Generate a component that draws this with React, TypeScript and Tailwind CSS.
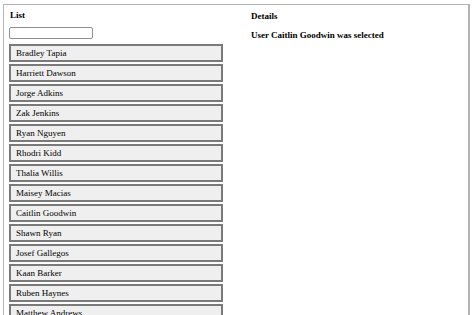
const users = [
  'Bradley Tapia',
  'Harriett Dawson',
  'Jorge Adkins',
  'Zak Jenkins',
  'Ryan Nguyen',
  'Rhodri Kidd',
  'Thalia Willis',
  'Maisey Macias',
  'Caitlin Goodwin',
  'Shawn Ryan',
  'Josef Gallegos',
  'Kaan Barker',
  'Ruben Haynes',
  'Matthew Andrews',
  'Kian Burgess',
];

export default function App() {
  const selected = 'Caitlin Goodwin';

  return (
    <div className="h-[315px] overflow-hidden bg-white font-['Liberation_Serif',serif] text-black">
      <div className="ml-[3px] mt-[4px] flex w-[467px] border border-r-2 border-[#b4b4b4] pl-[5px] pt-[5px]">
        <div className="w-[242px]">
          <h2 className="pl-[1px] text-[9px] font-bold leading-[10px]">List</h2>
          <input className="mt-[7px] block h-[12px] w-[84px] rounded-[2px] border border-[#8f8f8f] bg-white" />
          <div className="mt-[5px] flex flex-col gap-[2px]">
            {users.map((u) => (
              <button
                key={u}
                className="h-[18px] w-[214px] border-2 border-[#7a7a7a] bg-[#efefef] pl-[5px] text-left text-[9px] leading-[12px]"
              >
                {u}
              </button>
            ))}
          </div>
        </div>
        <div className="pt-[1px]">
          <h2 className="text-[9px] font-bold leading-[10px]">Details</h2>
          <p className="mt-[9px] text-[9px] font-bold leading-[10px]">User {selected} was selected</p>
        </div>
      </div>
    </div>
  );
}
